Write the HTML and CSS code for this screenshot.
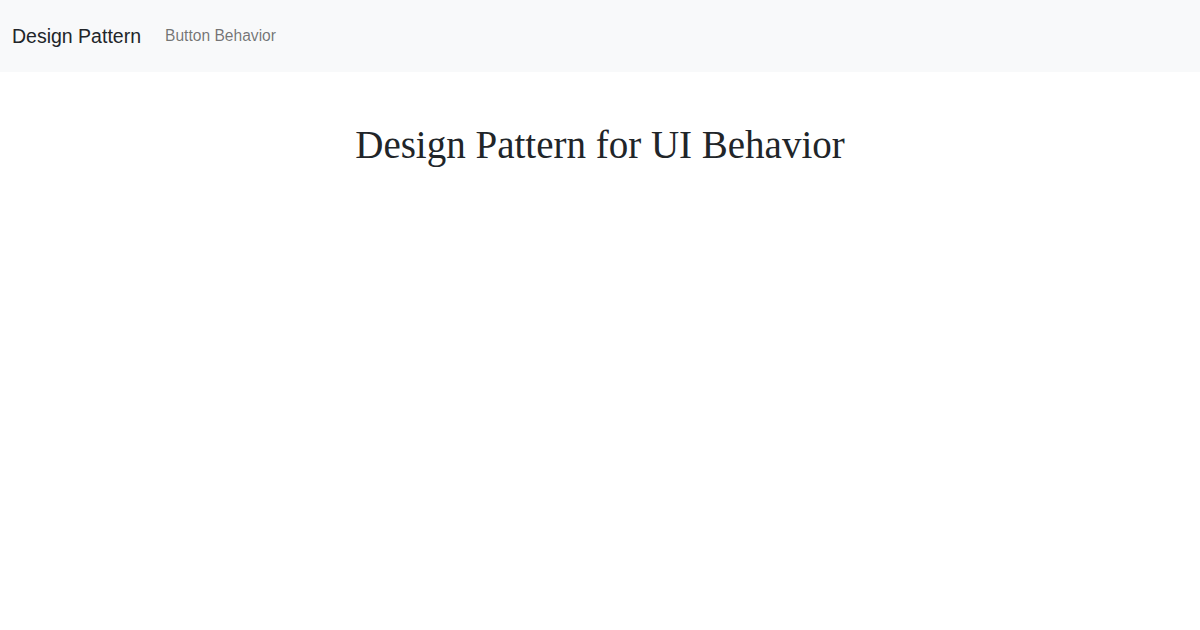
FILE: index.html
```html
<!DOCTYPE html>
<html lang="en">
<head>
<meta charset="utf-8">
<title>Design Pattern</title>
<link rel="stylesheet" href="styles.css">
</head>
<body>
<nav class="navbar">
  <a class="brand" href="#">Design Pattern</a>
  <ul class="nav">
    <li><a class="nav-link" href="#">Button Behavior</a></li>
  </ul>
</nav>
<main class="content">
  <h1 class="title">Design Pattern for UI Behavior</h1>
</main>
</body>
</html>
```

FILE: styles.css
```css
* { box-sizing: border-box; }

html, body {
  margin: 0;
  padding: 0;
  background: #fff;
  color: #212529;
}

body {
  font-family: "Liberation Sans", Arial, sans-serif;
  font-size: 16px;
  line-height: 1.5;
}

a { text-decoration: none; }

.navbar {
  display: flex;
  align-items: center;
  height: 72px;
  padding: 0 12px;
  background: #f8f9fa;
}

.brand {
  font-size: 19.5px;
  line-height: 30px;
  color: #212529;
  margin-right: 16px;
}

.nav {
  display: flex;
  list-style: none;
  margin: 0;
  padding: 0;
}

.nav-link {
  display: block;
  padding: 8px;
  font-size: 15.6px;
  color: rgba(0, 0, 0, 0.55);
}

.content {
  padding: 0 12px;
}

.title {
  margin: 50px 0 0;
  text-align: center;
  font-family: "Liberation Serif", "Times New Roman", serif;
  font-weight: 400;
  font-size: 39px;
  line-height: 1.2;
}
```
